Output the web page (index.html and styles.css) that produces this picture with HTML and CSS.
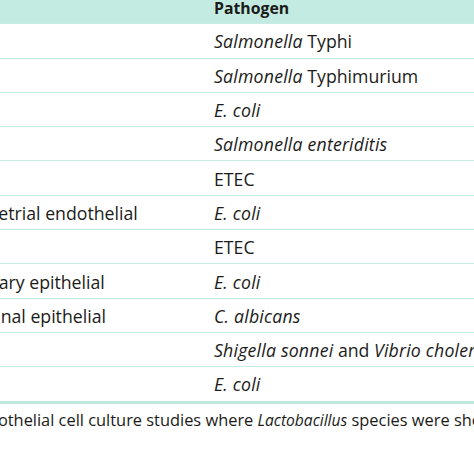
FILE: index.html
```html
<!DOCTYPE html>
<html lang="en">
<head>
<meta charset="utf-8">
<title>Lactobacillus cell culture studies</title>
<link rel="stylesheet" href="styles.css">
</head>
<body>
<div class="sheet">
  <table class="data">
    <thead>
      <tr><th class="c1">Cell type</th><th class="c2">Pathogen</th></tr>
    </thead>
    <tbody>
      <tr><td class="c1">Caco-2</td><td class="c2"><i>Salmonella</i> Typhi</td></tr>
      <tr><td class="c1">HT-29</td><td class="c2"><i>Salmonella</i> Typhimurium</td></tr>
      <tr><td class="c1">T84</td><td class="c2"><i>E. coli</i></td></tr>
      <tr><td class="c1">Caco-2</td><td class="c2"><i>Salmonella enteriditis</i></td></tr>
      <tr><td class="c1">IPEC-J2</td><td class="c2">ETEC</td></tr>
      <tr><td class="c1">Bovine endometrial endothelial</td><td class="c2"><i>E. coli</i></td></tr>
      <tr><td class="c1">IPEC-J2</td><td class="c2">ETEC</td></tr>
      <tr><td class="c1">Bovine mammary epithelial</td><td class="c2"><i>E. coli</i></td></tr>
      <tr><td class="c1">VK2/E6/E7 vaginal epithelial</td><td class="c2"><i>C. albicans</i></td></tr>
      <tr><td class="c1">HeLa</td><td class="c2"><i>Shigella sonnei</i> and <i>Vibrio cholerae</i></td></tr>
      <tr><td class="c1">Caco-2</td><td class="c2"><i>E. coli</i></td></tr>
    </tbody>
  </table>
  <p class="caption">Epithelial and endothelial cell culture studies where <i>Lactobacillus</i> species were shown to inhibit pathogens.</p>
</div>
</body>
</html>
```
FILE: styles.css
```css
html, body {
  margin: 0;
  padding: 0;
  background: #ffffff;
}
body {
  width: 474px;
  height: 474px;
  overflow: hidden;
  font-family: "Open Sans", "Noto Sans", sans-serif;
  font-size: 17.7px;
  color: #1b1b19;
}
.sheet {
  margin-left: -121px;
  margin-top: -10px;
  width: 900px;
}
.data {
  border-collapse: collapse;
  white-space: nowrap;
}
.data th, .data td {
  text-align: left;
  padding: 1px 0 0 0;
  height: 32.3px;
  vertical-align: middle;
}
.data th {
  background: #c3ebe2;
  font-weight: 700;
  font-size: 15.8px;
  padding-top: 3px;
  height: 30.3px;
}
.data td {
  border-top: 1px solid #c8ebe3;
}
.data td i {
  letter-spacing: 0.2px;
}
.data tbody tr:last-child td {
  border-bottom: 3px solid #bfe7de;
}
.c1 {
  width: 335px;
}
.caption {
  margin: 5px 0 0 -18px;
  white-space: nowrap;
  font-size: 16.4px;
  line-height: 21px;
}
.caption i {
  font-size: 15.6px;
}
```
